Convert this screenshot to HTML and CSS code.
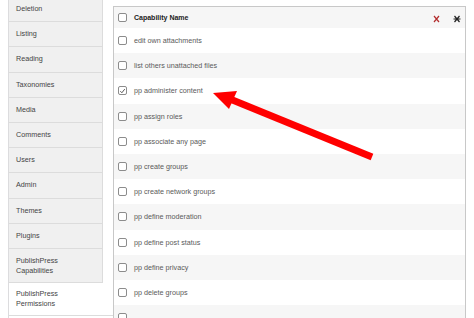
FILE: index.html
```html
<!DOCTYPE html>
<html lang="en">
<head>
    <meta charset="UTF-8">
    <title>Capabilities</title>
    <link rel="stylesheet" href="styles.css">
</head>
<body>
    <div class="layout">
        <ul class="tabs">
            <li class="first">Deletion</li>
            <li>Listing</li>
            <li>Reading</li>
            <li>Taxonomies</li>
            <li>Media</li>
            <li>Comments</li>
            <li>Users</li>
            <li>Admin</li>
            <li>Themes</li>
            <li>Plugins</li>
            <li class="double">PublishPress<br>Capabilities</li>
            <li class="double active">PublishPress<br>Permissions</li>
        </ul>

        <div class="panel">
            <div class="caps">
                <div class="row head">
                    <span class="box"></span>
                    <span class="name">Capability Name</span>
                    <span class="icons">
                        <svg width="7" height="8" viewBox="0 0 7 8"><path d="M1 1 L6 7 M6 1 L1 7" stroke="#b32d2e" stroke-width="1.2" fill="none"/></svg>
                        <svg width="8" height="8" viewBox="0 0 8 8"><path d="M1.5 1 L6.5 7 M6.5 1 L1.5 7 M0.5 4 L7.5 4" stroke="#222" stroke-width="1.2" fill="none"/></svg>
                    </span>
                </div>
                <div class="row"><span class="box"></span><span class="name">edit own attachments</span></div>
                <div class="row"><span class="box"></span><span class="name">list others unattached files</span></div>
                <div class="row">
                    <span class="box checked">
                        <svg width="8" height="8" viewBox="0 0 8 8"><path d="M1.5 4.2 L3.3 6 L6.6 1.8" stroke="#444" stroke-width="1" fill="none"/></svg>
                    </span>
                    <span class="name">pp administer content</span>
                </div>
                <div class="row"><span class="box"></span><span class="name">pp assign roles</span></div>
                <div class="row"><span class="box"></span><span class="name">pp associate any page</span></div>
                <div class="row"><span class="box"></span><span class="name">pp create groups</span></div>
                <div class="row"><span class="box"></span><span class="name">pp create network groups</span></div>
                <div class="row"><span class="box"></span><span class="name">pp define moderation</span></div>
                <div class="row"><span class="box"></span><span class="name">pp define post status</span></div>
                <div class="row"><span class="box"></span><span class="name">pp define privacy</span></div>
                <div class="row"><span class="box"></span><span class="name">pp delete groups</span></div>
                <div class="row"><span class="box"></span></div>
            </div>
        </div>
    </div>

    <!-- annotation arrow drawn over the table -->
    <svg class="arrow" width="474" height="318" viewBox="0 0 474 318">
        <line x1="230" y1="99" x2="372" y2="157" stroke="#f00" stroke-width="7"/>
        <polygon points="213,93 237,91 229,109" fill="#f00"/>
    </svg>
</body>
</html>
```

FILE: styles.css
```css
* {
    margin: 0;
    padding: 0;
    box-sizing: border-box;
}

body {
    font-family: 'Liberation Sans', Arial, sans-serif;
    background: #fff;
    width: 474px;
    height: 318px;
    overflow: hidden;
    position: relative;
}

.layout {
    display: flex;
    padding-left: 8px;
}

/* left tab column */
.tabs {
    list-style: none;
    width: 95px;
    margin-top: -3px;
    border-left: 1px solid #dcdcde;
}

.tabs li {
    height: 25.2px;
    padding-left: 7px;
    display: flex;
    align-items: center;
    background: #f0f0f0;
    border-bottom: 1px solid #dcdcdc;
    border-right: 1px solid #dcdcdc;
    font-size: 7.2px;
    line-height: 10px;
    color: #444;
}

.tabs li.double {
    height: 34.4px;
}

.tabs li.active {
    background: #fff;
    border-right: none;
    width: 105px;
    height: 33px;
}

/* capabilities table */
.panel {
    margin-left: 10px;
    padding-top: 6px;
}

.caps {
    width: 353px;
    border: 1px solid #c8c8c8;
    border-bottom: none;
}

.row {
    height: 25.2px;
    display: flex;
    align-items: center;
    padding-left: 4px;
    font-size: 7.2px;
    color: #5a5a5a;
}

.row:nth-child(odd) {
    background: #f6f6f6;
}

.row.head {
    height: 21px;
    color: #222;
    font-weight: bold;
    font-size: 7px;
}

.box {
    width: 9px;
    height: 9px;
    border: 1px solid #8c8c8c;
    border-radius: 2px;
    background: #fff;
    margin-right: 7px;
    display: flex;
    align-items: center;
    justify-content: center;
    flex-shrink: 0;
}

.name {
    flex: 1;
}

.icons {
    display: flex;
    align-items: center;
    gap: 13px;
    padding-right: 4px;
    padding-top: 3px;
}

.icons svg,
.box svg {
    display: block;
}

.arrow {
    position: absolute;
    top: 0;
    left: 0;
    pointer-events: none;
}
```
